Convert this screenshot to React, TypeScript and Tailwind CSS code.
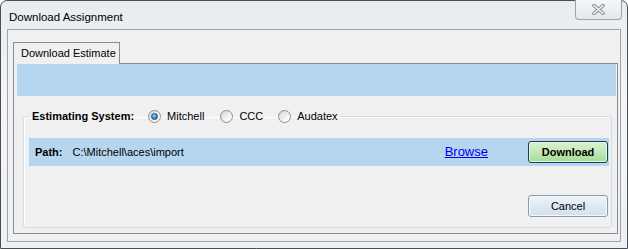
import React from 'react';

type RadioProps = { label: string; checked?: boolean; className?: string };

const Radio: React.FC<RadioProps> = ({ label, checked, className }) => (
  <span className={`flex items-center ${className ?? ''}`}>
    <span className="flex h-[13px] w-[13px] items-center justify-center rounded-full border border-[#8e8f8f] bg-[linear-gradient(135deg,#d4d4d4,#f4f4f4_60%,#ffffff)]">
      {checked && (
        <span className="h-[7px] w-[7px] rounded-full border border-[#1b4f7e] bg-[radial-gradient(circle_at_40%_35%,#9fdcff,#2a86c8_55%,#0f4a86)]" />
      )}
    </span>
    <span className="ml-[6px] font-normal">{label}</span>
  </span>
);

export default function App() {
  return (
    <div className="w-[628px] h-[249px] font-['Liberation_Sans',Arial,sans-serif] text-[11px] text-black">
      <div className="flex h-full w-full flex-col rounded-t-[7px] border border-[#4b4f55] bg-[linear-gradient(180deg,#e8ecf0,#f3f5f7_40%,#eef1f4)] px-[6px] pb-[6px]">
        {/* title bar */}
        <div className="flex h-[28px] items-start justify-between">
          <span className="ml-[2px] mt-[10px] text-[11.5px] leading-[13px]">Download Assignment</span>
          <button
            type="button"
            aria-label="Close"
            className="-mr-px -mt-px flex h-[20px] w-[47px] items-center justify-center rounded-b-[4px] border border-t-0 border-[#9aa3ad] bg-[linear-gradient(180deg,#f5f6f8,#e4e8ec)]"
          >
            <svg width="13" height="11" viewBox="0 0 13 11">
              <path d="M2 1.5 L11 9.5 M11 1.5 L2 9.5" stroke="#8a8f96" strokeWidth="3.6" strokeLinecap="round" />
              <path d="M2 1.5 L11 9.5 M11 1.5 L2 9.5" stroke="#f4f5f6" strokeWidth="1.6" strokeLinecap="round" />
            </svg>
          </button>
        </div>

        {/* client area */}
        <div className="flex flex-1 flex-col border border-[#9ba3ac] bg-[#f0f0f0] pb-[7px] pl-[5px] pr-[2px] pt-[12px]">
          {/* tab strip */}
          <div className="flex">
            <div className="relative z-10 -mb-px h-[22px] w-[107px] border border-b-0 border-[#898c95] bg-[#f0f0f0] pl-[7px] pt-[4px] leading-[13px]">
              Download Estimate
            </div>
          </div>

          {/* tab page */}
          <div className="flex flex-1 flex-col border border-[#898c95] bg-[#f0f0f0] pl-[3px] pr-[1px]">
            <div className="h-[32px] bg-[#b6d5ee]" />

            <fieldset className="ml-[6px] mr-[4px] mt-[12px] rounded-[3px] border border-[#d3dde4] pb-[10px] pl-[5px] pr-[2px] shadow-[inset_1px_1px_0_#ffffff]">
              <legend className="ml-[1px] flex h-[16px] items-center px-[2px]">
                <span className="font-bold">Estimating System:</span>
                <Radio label="Mitchell" checked className="ml-[14px]" />
                <Radio label="CCC" className="ml-[16px]" />
                <Radio label="Audatex" className="ml-[15px]" />
              </legend>

              <div className="mt-[14px] flex h-[28px] items-center bg-[#b6d5ee] pl-[6px] pr-[1px]">
                <span className="font-bold">Path:</span>
                <span className="ml-[10px]">C:\Mitchell\aces\import</span>
                <a href="#" className="ml-auto mr-[40px] text-[13px] text-[#0000ee] underline">
                  Browse
                </a>
                <button
                  type="button"
                  className="h-[22px] w-[80px] rounded-[3px] border border-[#1d3a57] bg-[linear-gradient(180deg,#d9f2d1,#c2e8b6_50%,#a6da95)] font-bold shadow-[inset_0_0_0_1px_#e8f7e2]"
                >
                  Download
                </button>
              </div>

              <div className="mt-[29px] flex justify-end pr-[1px]">
                <button
                  type="button"
                  className="h-[22px] w-[80px] rounded-[3px] border border-[#8d9aa8] bg-[linear-gradient(180deg,#eef4fa,#dfe9f4_50%,#d2e0ee)] shadow-[inset_0_0_0_1px_#f6f9fc]"
                >
                  Cancel
                </button>
              </div>
            </fieldset>
          </div>
        </div>
      </div>
    </div>
  );
}
